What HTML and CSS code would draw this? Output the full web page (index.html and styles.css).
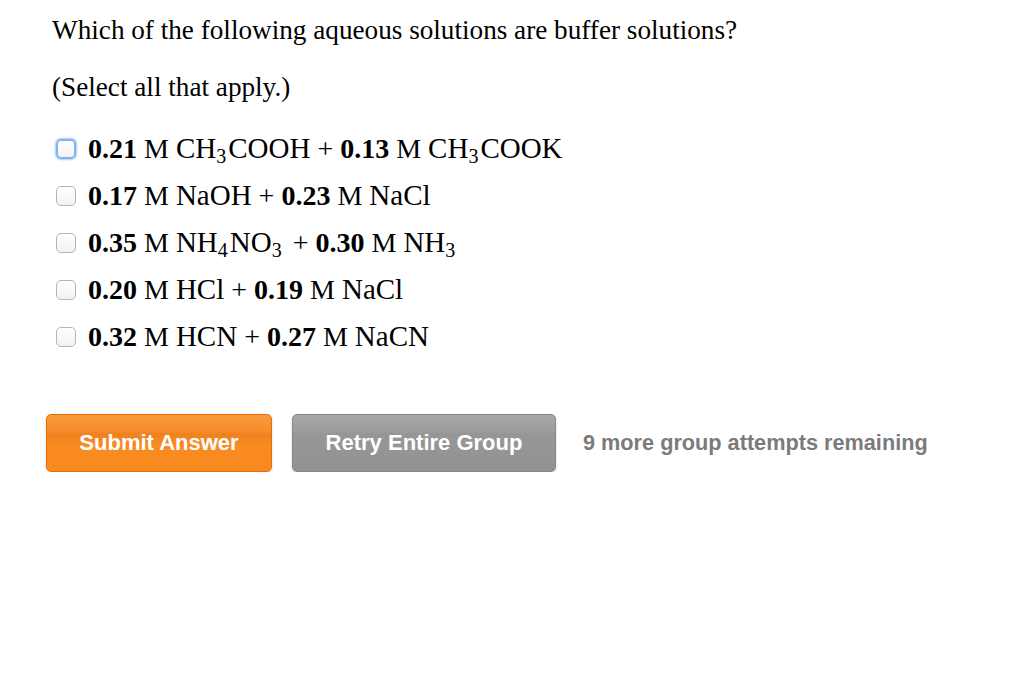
FILE: index.html
```html
<!DOCTYPE html>
<html>
<head>
<meta charset="utf-8">
<link rel="stylesheet" href="styles.css">
</head>
<body>
<div class="page">
  <p class="question">Which of the following aqueous solutions are buffer solutions?</p>
  <p class="hint">(Select all that apply.)</p>
  <ul class="options">
    <li class="option"><span class="box focus"></span><span class="txt"><b>0.21</b> M <span class="f">CH<sub>3</sub>COOH</span> + <b>0.13</b> M <span class="f">CH<sub>3</sub>COOK</span></span></li>
    <li class="option"><span class="box"></span><span class="txt"><b>0.17</b> M <span class="f">NaOH</span> + <b>0.23</b> M <span class="f">NaCl</span></span></li>
    <li class="option"><span class="box"></span><span class="txt"><b>0.35</b> M <span class="f gap">NH<sub>4</sub>NO<sub>3</sub></span> + <b>0.30</b> M <span class="f">NH<sub>3</sub></span></span></li>
    <li class="option"><span class="box"></span><span class="txt"><b>0.20</b> M <span class="f">HCl</span> + <b>0.19</b> M <span class="f">NaCl</span></span></li>
    <li class="option"><span class="box"></span><span class="txt"><b>0.32</b> M <span class="f">HCN</span> + <b>0.27</b> M <span class="f">NaCN</span></span></li>
  </ul>
  <div class="actions">
    <button class="btn submit">Submit Answer</button>
    <button class="btn retry">Retry Entire Group</button>
    <span class="remaining">9 more group attempts remaining</span>
  </div>
</div>
</body>
</html>
```
FILE: styles.css
```css
html, body { margin: 0; padding: 0; background: #fff; }
body { font-family: "Liberation Serif", "Times New Roman", serif; color: #000; }
.page { padding: 14px 0 0 52px; }
.question { margin: 0; font-size: 27.2px; line-height: 30px; transform: scaleY(1.04); transform-origin: left top; }
.hint { margin: 27px 0 0 0; font-size: 27.2px; line-height: 30px; transform: scaleY(1.04); transform-origin: left top; }
.options { list-style: none; margin: 24px 0 0 0; padding: 0; }
.option { display: flex; align-items: center; height: 47px; }
.box { width: 20px; height: 20px; border: 1px solid #b5b5b5; border-radius: 5px; margin: 0 12px 0 4px; background: linear-gradient(#fff, #f2f2f2); box-sizing: border-box; flex: none; }
.box.focus { border: 2px solid #7fb2ee; box-shadow: 0 0 2px 1px #a9cbf5; }
.txt { font-size: 28px; white-space: nowrap; }
.txt b { font-weight: bold; }
.f { font-size: 29px; }
.f.gap { margin-right: 2px; }
.f sub { font-size: 20px; vertical-align: -5px; line-height: 0; margin-right: 2px; }
.actions { display: flex; align-items: center; margin-top: 54px; margin-left: -6px; }
.btn { font-family: "Liberation Sans", Arial, sans-serif; font-weight: bold; font-size: 22px; color: #fff; height: 58px; border-radius: 5px; padding: 0; cursor: pointer; box-shadow: 0 1px 3px rgba(0,0,0,0.15); }
.submit { width: 226px; background: linear-gradient(#f99a3c 0%, #f78d2a 28%, #ee8220 34%, #f98b22 55%, #f98a1f 100%); border: 1px solid #e86a0e; }
.retry { width: 264px; margin-left: 20px; background: linear-gradient(#a7a7a7 0%, #9d9d9d 28%, #969696 34%, #959595 60%, #929292 100%); border: 1px solid #878787; }
.remaining { margin-left: 27px; font-family: "Liberation Sans", Arial, sans-serif; font-weight: bold; font-size: 21.7px; color: #7b7b7b; }
```
